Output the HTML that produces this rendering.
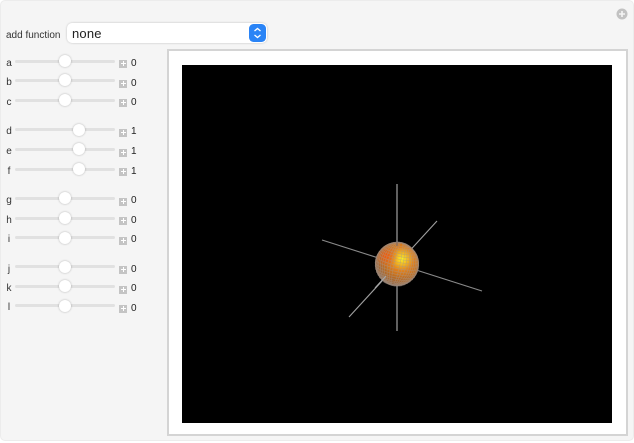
<!DOCTYPE html>
<html><head><meta charset="utf-8"><style>
html,body{margin:0;padding:0;background:#fff}
#p{position:relative;width:634px;height:443px;overflow:hidden;background:#fff;font-family:"Liberation Sans",sans-serif;color:#222}
#bg{position:absolute;left:0;top:0;box-sizing:border-box;width:634px;height:441px;background:#f5f5f5;border:1px solid #ececec;border-radius:5px}
.abs{position:absolute}
.t{position:absolute;left:15px;width:100px;height:3px;border-radius:2px;background:#e1e1e1}
.k{position:absolute;width:12px;height:12px;border-radius:50%;background:#fff;box-shadow:0 0 2px rgba(0,0,0,.28)}
.l{position:absolute;width:12px;text-align:center;left:3px;font-size:10px;line-height:12px;color:#333;margin-top:1px}
.v{position:absolute;left:131px;font-size:10px;line-height:12px;color:#222;margin-top:1px}
.b{position:absolute;left:119px;width:8px;height:8px;background:#c4c4c4;margin-top:-.5px}
.b:before{content:"";position:absolute;left:1.5px;top:3.5px;width:5px;height:1px;background:#fff}
.b:after{content:"";position:absolute;left:3.5px;top:1.5px;width:1px;height:5px;background:#fff}
</style></head><body><div id="p">
<div id="bg"></div>
<svg class="abs" style="left:616px;top:8px" width="12" height="12" viewBox="0 0 12 12"><circle cx="6" cy="6" r="5.5" fill="#c2c2c2"/><path d="M6 3v6M3 6h6" stroke="#f5f5f5" stroke-width="1.6"/></svg>
<div class="abs" style="left:6px;top:29px;font-size:10px;line-height:13px;color:#333">add function</div>
<div class="abs" style="left:67px;top:23px;width:200px;height:20px;background:#fff;border-radius:5px;box-shadow:0 0 2px rgba(0,0,0,.22);"></div>
<div class="abs" style="left:72px;top:26px;font-size:13px;line-height:15px;color:#222;letter-spacing:.2px">none</div>
<svg class="abs" style="left:249px;top:24px" width="17" height="18" viewBox="0 0 17 18"><rect width="17" height="18" rx="4.5" fill="#2a84f6"/><path d="M5.5 7 8.500 4.500 11.500 7M5.500 11 8.500 13.500 11.500 11" fill="none" stroke="#fff" stroke-width="1.3"/></svg>
<div class="abs" style="left:167px;top:49px;width:461px;height:387px;box-sizing:border-box;background:#fff;border:2px solid #d4d4d4"></div>
<div class="abs" style="left:182px;top:65px;width:430px;height:358px;background:#000"></div>

<div class="t" style="top:60px"></div><div class="k" style="left:59px;top:55px"></div><div class="l" style="top:57px">a</div><div class="b" style="top:60px"></div><div class="v" style="top:57px">0</div>
<div class="t" style="top:79px"></div><div class="k" style="left:59px;top:74px"></div><div class="l" style="top:76px">b</div><div class="b" style="top:80px"></div><div class="v" style="top:77px">0</div>
<div class="t" style="top:99px"></div><div class="k" style="left:59px;top:94px"></div><div class="l" style="top:96px">c</div><div class="b" style="top:99px"></div><div class="v" style="top:96px">0</div>
<div class="t" style="top:128px"></div><div class="k" style="left:73px;top:124px"></div><div class="l" style="top:125px">d</div><div class="b" style="top:129px"></div><div class="v" style="top:125px">1</div>
<div class="t" style="top:148px"></div><div class="k" style="left:73px;top:143px"></div><div class="l" style="top:145px">e</div><div class="b" style="top:149px"></div><div class="v" style="top:145px">1</div>
<div class="t" style="top:168px"></div><div class="k" style="left:73px;top:163px"></div><div class="l" style="top:165px">f</div><div class="b" style="top:168px"></div><div class="v" style="top:165px">1</div>
<div class="t" style="top:197px"></div><div class="k" style="left:59px;top:192px"></div><div class="l" style="top:194px">g</div><div class="b" style="top:198px"></div><div class="v" style="top:194px">0</div>
<div class="t" style="top:217px"></div><div class="k" style="left:59px;top:212px"></div><div class="l" style="top:214px">h</div><div class="b" style="top:217px"></div><div class="v" style="top:214px">0</div>
<div class="t" style="top:236px"></div><div class="k" style="left:59px;top:232px"></div><div class="l" style="top:233px">i</div><div class="b" style="top:237px"></div><div class="v" style="top:233px">0</div>
<div class="t" style="top:265px"></div><div class="k" style="left:59px;top:261px"></div><div class="l" style="top:263px">j</div><div class="b" style="top:266px"></div><div class="v" style="top:263px">0</div>
<div class="t" style="top:285px"></div><div class="k" style="left:59px;top:280px"></div><div class="l" style="top:282px">k</div><div class="b" style="top:286px"></div><div class="v" style="top:282px">0</div>
<div class="t" style="top:304px"></div><div class="k" style="left:59px;top:300px"></div><div class="l" style="top:301px">l</div><div class="b" style="top:305px"></div><div class="v" style="top:302px">0</div>

<svg class="abs" style="left:182px;top:65px" width="430" height="358" viewBox="182 65 430 358">
<defs>
<radialGradient id="g" gradientUnits="userSpaceOnUse" cx="402" cy="259" r="28">
<stop offset="0" stop-color="#fcf222"/><stop offset=".18" stop-color="#f4bf22"/><stop offset=".42" stop-color="#e2811c"/><stop offset=".72" stop-color="#b96a22"/><stop offset="1" stop-color="#8f6a50"/>
</radialGradient>
<radialGradient id="o" gradientUnits="userSpaceOnUse" cx="386" cy="256" r="12">
<stop offset="0" stop-color="#f6580a" stop-opacity=".95"/><stop offset="1" stop-color="#e06a20" stop-opacity="0"/>
</radialGradient>
</defs>
<g stroke="#8a8a8a" fill="none">
<path d="M397 184V331" stroke-width="1.4"/>
<path d="M322 240 482 291" stroke-width="1.1"/>
<path d="M437 221 349 317" stroke="#a0a0a0" stroke-width="1.1"/>
</g>
<circle cx="397" cy="264" r="22" fill="url(#g)"/>
<circle cx="397" cy="264" r="22" fill="url(#o)"/>
<g transform="translate(397 264) rotate(12)" fill="none" stroke="#a8988a" stroke-width=".6" opacity=".6">
<ellipse rx="3" ry="22"/><ellipse rx="6" ry="22"/><ellipse rx="9" ry="22"/><ellipse rx="12" ry="22"/><ellipse rx="14.300" ry="22"/><ellipse rx="16.400" ry="22"/><ellipse rx="18.300" ry="22"/><ellipse rx="19.800" ry="22"/><ellipse rx="21" ry="22"/>
<path d="M-22 0A22 4.400 0 0 0 22 0"/>
<path d="M-21.800 3.100A21.800 4.400 0 0 0 21.800 3.100M-21.800 -3.100A21.800 4.400 0 0 0 21.800 -3.100"/>
<path d="M-21.100 6.100A21.100 4.200 0 0 0 21.100 6.100M-21.100 -6.100A21.100 4.200 0 0 0 21.100 -6.100"/>
<path d="M-20.100 9A20.100 4 0 0 0 20.100 9M-20.100 -9A20.100 4 0 0 0 20.100 -9"/>
<path d="M-18.700 11.600A18.700 3.700 0 0 0 18.700 11.600M-18.700 -11.600A18.700 3.700 0 0 0 18.700 -11.600"/>
<path d="M-16.900 14.100A16.900 3.400 0 0 0 16.900 14.100M-16.900 -14.100A16.900 3.400 0 0 0 16.900 -14.100"/>
<path d="M-14.700 16.300A14.700 2.900 0 0 0 14.700 16.300M-14.700 -16.300A14.700 2.900 0 0 0 14.700 -16.300"/>
<path d="M-12.300 18.200A12.300 2.500 0 0 0 12.300 18.200M-12.300 -18.200A12.300 2.500 0 0 0 12.300 -18.200"/>
<path d="M-9.600 19.800A9.600 1.900 0 0 0 9.600 19.800M-9.600 -19.800A9.600 1.900 0 0 0 9.600 -19.800"/>
</g>
<circle cx="397" cy="264" r="21.500" fill="none" stroke="#9a8576" stroke-width="1"/>
<path d="M397 242V246" stroke="#8a6f60" stroke-width="1.4"/>
<path d="M386 276 375 288" stroke="#a8a8a8" stroke-width="1.1"/>
</svg>
</div></body></html>
